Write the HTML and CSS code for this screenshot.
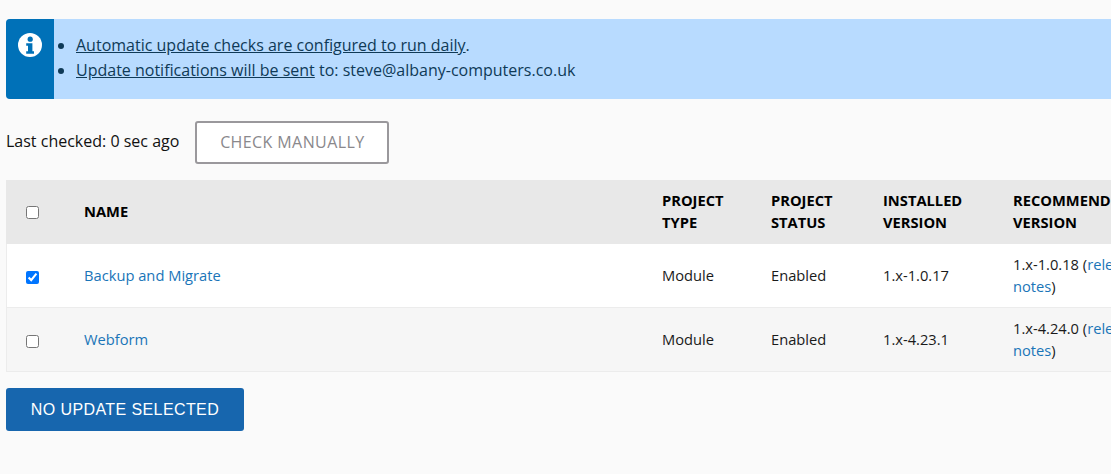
FILE: index.html
```html
<!DOCTYPE html>
<html lang="en">

<head>
    <title>Available updates</title>
    <link rel="stylesheet" href="styles.css">
</head>

<body>
    <div class="notice">
        <div class="notice-icon">
            <svg width="24" height="24" viewBox="0 0 24 24">
                <circle cx="12" cy="12" r="12" fill="#fff" />
                <circle cx="12.2" cy="6.2" r="2.6" fill="#0071b8" />
                <path d="M8.2 10.2h6.2v8h1.6v2.6H8.2v-2.6h1.8v-5.4H8.2z" fill="#0071b8" />
            </svg>
        </div>
        <ul class="notice-list">
            <li><a href="#">Automatic update checks are configured to run daily</a>.</li>
            <li><a href="#">Update notifications will be sent</a> to: steve@albany-computers.co.uk</li>
        </ul>
    </div>

    <div class="check-row">
        <span class="last-checked">Last checked: 0 sec ago</span>
        <button class="btn-check">CHECK MANUALLY</button>
    </div>

    <table class="updates">
        <thead>
            <tr>
                <th class="col-check"><input type="checkbox" /></th>
                <th class="col-name">NAME</th>
                <th class="col-type">PROJECT TYPE</th>
                <th class="col-status">PROJECT STATUS</th>
                <th class="col-installed">INSTALLED VERSION</th>
                <th class="col-recommended">RECOMMENDED VERSION</th>
            </tr>
        </thead>
        <tbody>
            <tr>
                <td><input type="checkbox" checked /></td>
                <td><a href="#">Backup and Migrate</a></td>
                <td>Module</td>
                <td>Enabled</td>
                <td>1.x-1.0.17</td>
                <td>1.x-1.0.18 (<a href="#">release notes</a>)</td>
            </tr>
            <tr class="even">
                <td><input type="checkbox" /></td>
                <td><a href="#">Webform</a></td>
                <td>Module</td>
                <td>Enabled</td>
                <td>1.x-4.23.1</td>
                <td>1.x-4.24.0 (<a href="#">release notes</a>)</td>
            </tr>
        </tbody>
    </table>

    <button class="btn-update">NO UPDATE SELECTED</button>
</body>

</html>
```

FILE: styles.css
```css
html,
body {
    overflow: hidden;
}

body {
    margin: 0;
    width: 1111px;
    height: 474px;
    padding: 19px 0 0 6px;
    box-sizing: border-box;
    background: #fafafa;
    color: #1a1a1a;
    font-family: "Open Sans", sans-serif;
    font-size: 14.7px;
    line-height: 22px;
}

a {
    color: #1a75b8;
    text-decoration: none;
}

.notice {
    display: flex;
    width: 1125px;
    height: 80px;
    border-radius: 4px;
    overflow: hidden;
    background: #b8dbff;
    color: #0f3a57;
}

.notice-icon {
    flex: 0 0 48px;
    padding: 14px 0 0 12px;
    box-sizing: border-box;
    background: #0071b8;
}

.notice-list {
    margin: 0;
    padding: 14px 0 0 22px;
    font-size: 16px;
    line-height: 25px;
}

.notice-list a {
    color: #0f3a57;
    text-decoration: underline;
}

.check-row {
    display: flex;
    align-items: center;
    gap: 16px;
    margin-top: 22px;
    color: #111;
    font-size: 16px;
}

.last-checked {
    padding-bottom: 3px;
}

.btn-check {
    width: 194px;
    height: 43px;
    padding: 0 0 2px;
    border: 2px solid #9a989c;
    border-radius: 3px;
    background: #fff;
    color: #8a888c;
    font-family: "Open Sans", sans-serif;
    font-size: 16px;
    letter-spacing: .4px;
}

.updates {
    margin-top: 16px;
    width: 1155px;
    table-layout: fixed;
    border-collapse: separate;
    border-spacing: 0;
    background: #fff;
}

.updates th {
    height: 64px;
    padding: 0 12px 2px;
    box-sizing: border-box;
    background: #e8e8e8;
    color: #000;
    font-weight: 700;
    text-align: left;
}

.updates td {
    height: 64px;
    padding: 0 12px 2px;
    box-sizing: border-box;
    border-bottom: 1px solid #ececec;
}

.updates td:first-child {
    padding-left: 19px;
    border-left: 1px solid #ececec;
}

.updates th:first-child {
    padding-left: 20px;
}

.updates input {
    display: block;
    width: 13px;
    height: 13px;
    margin: 3px 0 0;
}

.updates td input {
    margin-top: 5px;
}

.even td {
    background: #f6f6f6;
}

.col-check {
    width: 66px;
}

.col-name {
    width: 578px;
}

.col-type {
    width: 109px;
}

.col-status {
    width: 112px;
}

.col-installed {
    width: 130px;
}

.btn-update {
    display: block;
    margin-top: 16px;
    width: 238px;
    height: 43px;
    padding: 1px 0 0;
    border: 0;
    border-radius: 3px;
    background: #1766ae;
    color: #fff;
    font-family: "Liberation Sans", sans-serif;
    font-size: 16px;
    letter-spacing: .4px;
}
```
